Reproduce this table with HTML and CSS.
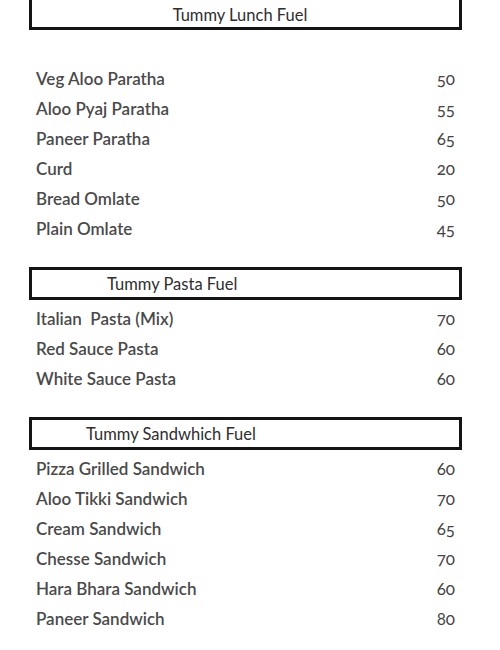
FILE: index.html
```html
<!DOCTYPE html>
<html>
<head>
<meta charset="utf-8">
<link rel="stylesheet" href="styles.css">
</head>
<body>
<div class="menu">
  <div class="section-title section-title--first title-center">Tummy Lunch Fuel</div>
  <ul class="items items--first">
    <li class="item"><span>Veg Aloo Paratha</span><span class="price">50</span></li>
    <li class="item"><span>Aloo Pyaj Paratha</span><span class="price">55</span></li>
    <li class="item"><span>Paneer Paratha</span><span class="price">65</span></li>
    <li class="item"><span>Curd</span><span class="price">20</span></li>
    <li class="item"><span>Bread Omlate</span><span class="price">50</span></li>
    <li class="item"><span>Plain Omlate</span><span class="price">45</span></li>
  </ul>

  <div class="section-title title-pasta">Tummy Pasta Fuel</div>
  <ul class="items">
    <li class="item"><span>Italian&nbsp; Pasta (Mix)</span><span class="price">70</span></li>
    <li class="item"><span>Red Sauce Pasta</span><span class="price">60</span></li>
    <li class="item"><span>White Sauce Pasta</span><span class="price">60</span></li>
  </ul>

  <div class="section-title title-sandwich">Tummy Sandwhich Fuel</div>
  <ul class="items">
    <li class="item"><span>Pizza Grilled Sandwich</span><span class="price">60</span></li>
    <li class="item"><span>Aloo Tikki Sandwich</span><span class="price">70</span></li>
    <li class="item"><span>Cream Sandwich</span><span class="price">65</span></li>
    <li class="item"><span>Chesse Sandwich</span><span class="price">70</span></li>
    <li class="item"><span>Hara Bhara Sandwich</span><span class="price">60</span></li>
    <li class="item"><span>Paneer Sandwich</span><span class="price">80</span></li>
  </ul>
</div>
</body>
</html>
```

FILE: styles.css
```css
html, body {
  margin: 0;
  padding: 0;
  background: #ffffff;
}

body {
  font-family: Lato, "Open Sans", "Liberation Sans", sans-serif;
  overflow: hidden;
}

.menu {
  width: 433px;
  margin-left: 29px;
}

.section-title {
  box-sizing: border-box;
  height: 33px;
  border: 3px solid #141414;
  display: flex;
  align-items: center;
  font-size: 16.5px;
  color: #2e2e2e;
  margin-top: 24px;
}

.section-title--first {
  margin-top: -4px;
  height: 34px;
  padding-top: 3px;
}

.title-center {
  justify-content: center;
  padding-right: 11px;
}

.title-pasta {
  padding-left: 75px;
}

.title-sandwich {
  padding-left: 54px;
}

.items {
  list-style: none;
  margin: 3px 0 0 0;
  padding: 0 7px 0 7px;
}

.items--first {
  margin-top: 33px;
}

.item {
  height: 30px;
  display: flex;
  align-items: center;
  justify-content: space-between;
  font-size: 17px;
  font-weight: 600;
  color: #4a4a4a;
}

.price {
  font-weight: 400;
  color: #444444;
  font-variant-numeric: oldstyle-nums;
}
```
